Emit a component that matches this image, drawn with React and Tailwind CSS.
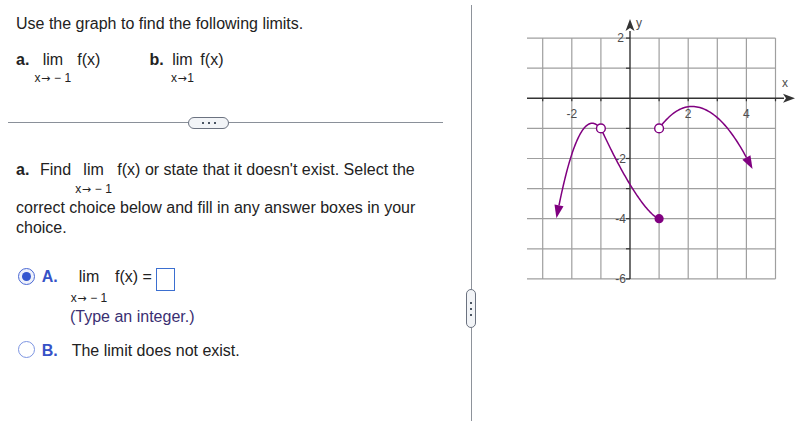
import React from "react";

// graph coordinate helpers (page pixels)
const X = (x) => 630 + 29.1 * x;
const Y = (y) => 98.3 - 30.1 * y;

const curvePath = (f, x0, x1, n = 60) => {
	let d = "";
	for (let i = 0; i <= n; i++) {
		const x = x0 + ((x1 - x0) * i) / n;
		d += `${i === 0 ? "M" : "L"}${X(x).toFixed(2)} ${Y(f(x)).toFixed(2)} `;
	}
	return d;
};

// arrowhead from the curve end, pointing away along the tangent
const arrowHead = (f, xb, dir) => {
	const h = 0.001;
	const bx = X(xb);
	const by = Y(f(xb));
	const tx = X(xb + dir * h) - bx;
	const ty = Y(f(xb + dir * h)) - by;
	const len = Math.hypot(tx, ty);
	const ux = tx / len;
	const uy = ty / len;
	const L = 13;
	const w = 4.6;
	const tipX = bx + ux * L;
	const tipY = by + uy * L;
	return `${tipX},${tipY} ${bx - uy * w},${by + ux * w} ${bx + uy * w},${by - ux * w}`;
};

const leftPiece = (x) => -0.83 - 2.1 * (x + 1.3) ** 2;
const midPiece = (x) => {
	const t = (x + 1) / 2;
	return -1 - 3 * (1 - (1 - t) ** 1.4);
};
const rightPiece = (x) =>
	x < 2.12 ? -0.27 - 0.58 * (x - 2.12) ** 2 : -0.27 - 0.48 * (x - 2.12) ** 2;

const Graph = () => {
	const vx = [-3, -2, -1, 1, 2, 3, 4, 5];
	const hy = [2, 1, -1, -2, -3, -4, -5, -6];
	const purple = "#800080";
	return (
		<svg width="319" height="421" viewBox="476 0 319 421" className="block">
			{/* grid */}
			{hy.map((k) => (
				<line key={"h" + k} x1="527" x2={X(5)} y1={Y(k)} y2={Y(k)} stroke="#9f9f9f" strokeWidth="1.2" />
			))}
			{vx.map((k) => (
				<line key={"v" + k} x1={X(k)} x2={X(k)} y1={Y(2)} y2={Y(-6)} stroke="#9f9f9f" strokeWidth="1.2" />
			))}
			{/* axes */}
			<line x1="527" x2="784" y1={Y(0)} y2={Y(0)} stroke="#333" strokeWidth="1.4" />
			<polygon points={`795,${Y(0)} 783,${Y(0) - 4.5} 786,${Y(0)} 783,${Y(0) + 4.5}`} fill="#333" />
			<line x1="630" x2="630" y1={Y(-6)} y2="31" stroke="#333" strokeWidth="1.4" />
			<polygon points="630,19 625.5,31 630,28 634.5,31" fill="#333" />
			{vx.map((k) => (
				<line key={"tx" + k} x1={X(k)} x2={X(k)} y1={Y(0)} y2={Y(0) + 3} stroke="#333" strokeWidth="1.2" />
			))}
			{hy.map((k) => (
				<line key={"ty" + k} x1="626" x2="630" y1={Y(k)} y2={Y(k)} stroke="#333" strokeWidth="1.2" />
			))}
			{/* labels */}
			<g fill="#4d4d4d" fontSize="12">
				<text x="624" y={Y(2) + 4.3} textAnchor="end">2</text>
				<text x="626" y={Y(-2) + 4.3} textAnchor="end">-2</text>
				<text x="626" y={Y(-4) + 4.3} textAnchor="end">-4</text>
				<text x="626" y={Y(-6) + 4.3} textAnchor="end">-6</text>
				<text x={X(-2)} y="118" textAnchor="middle">-2</text>
				<text x={X(2)} y="118" textAnchor="middle">2</text>
				<text x={X(4)} y="118" textAnchor="middle">4</text>
				<text x="782" y="87">x</text>
				<text x="636" y="27">y</text>
			</g>
			{/* function */}
			<g fill="none" stroke={purple} strokeWidth="1.5">
				<path d={curvePath(leftPiece, -2.44, -1)} />
				<path d={curvePath(midPiece, -1, 1)} />
				<path d={curvePath(rightPiece, 1, 4.0)} />
			</g>
			<polygon points={arrowHead(leftPiece, -2.44, -1)} fill={purple} />
			<polygon points={arrowHead(rightPiece, 4.0, 1)} fill={purple} />
			<circle cx={X(-1)} cy={Y(-1)} r="4.4" fill="#fff" stroke={purple} strokeWidth="1.4" />
			<circle cx={X(1)} cy={Y(-1)} r="4.4" fill="#fff" stroke={purple} strokeWidth="1.4" />
			<circle cx={X(1)} cy={Y(-4)} r="4.6" fill={purple} />
		</svg>
	);
};

// subscript "x→a" with a wider arrow glyph
const Sub = ({ to }) => (
	<>
		x<span className="font-['DejaVu_Sans',sans-serif] text-[11px] leading-none mx-[0.5px]">→</span>
		{to}
	</>
);

// "lim" with its subscript centred below
const Lim = ({ sub, className, subClass }) => (
	<span className={`inline-flex flex-col items-center shrink-0 ${className}`}>
		<span className="leading-[20px]">lim</span>
		<span className={`text-[12px] leading-[14px] h-[14px] whitespace-nowrap ${subClass}`}>{sub}</span>
	</span>
);

const Radio = ({ checked, className }) => (
	<span
		className={`w-[17px] h-[17px] shrink-0 rounded-full flex items-center justify-center border-[1.5px] ${
			checked ? "border-[#4a68d4] bg-[#eef1fb]" : "border-[#7d95e2] bg-white"
		} ${className}`}>
		{checked && <span className="w-[9px] h-[9px] rounded-full bg-[#3456cf]" />}
	</span>
);

export default function App() {
	return (
		<div className="w-[795px] h-[421px] bg-white flex overflow-hidden font-['Liberation_Sans',Arial,sans-serif] text-[#222]">
			{/* question panel */}
			<div className="w-[466px] shrink-0 text-[16px] leading-[20px]">
				<p className="ml-[16px] mt-[14px] whitespace-nowrap">Use the graph to find the following limits.</p>

				<div className="mt-[15.7px] ml-[16px] flex items-start whitespace-nowrap">
					<b>a.</b>
					<Lim sub={<Sub to=" − 1" />} className="ml-[4px] w-[39px]" subClass="mt-[1px]" />
					<span className="ml-[5px]">f(x)</span>
					<b className="ml-[49px]">b.</b>
					<Lim sub={<Sub to="1" />} className="ml-[5.7px] w-[26px]" subClass="mt-[1px]" />
					<span className="ml-[5px]">f(x)</span>
				</div>

				{/* collapsible separator */}
				<div className="mt-[32.3px] ml-[8px] h-[12px] flex items-center">
					<div className="w-[180px] h-px bg-[#8a9099]" />
					<div className="w-[41px] h-[12px] rounded-full border border-[#6b7280] bg-[#f2f4f7] flex items-center justify-center gap-[4px]">
						<span className="w-[2px] h-[2px] bg-[#4b5563]" />
						<span className="w-[2px] h-[2px] bg-[#4b5563]" />
						<span className="w-[2px] h-[2px] bg-[#4b5563]" />
					</div>
					<div className="w-[214px] h-px bg-[#8a9099]" />
				</div>

				<div className="mt-[30.7px] ml-[16px] flex items-start whitespace-nowrap">
					<b>a.</b>
					<span className="ml-[10.7px]">Find</span>
					<Lim sub={<Sub to=" − 1" />} className="ml-[2.9px] w-[39px]" subClass="mt-[2px]" />
					<span className="ml-[4.3px]">f(x) or state that it doesn't exist. Select the</span>
				</div>
				<p className="mt-[2.6px] ml-[16px] w-[430px] leading-[19.5px]">
					correct choice below and fill in any answer boxes in your choice.
				</p>

				{/* choice A */}
				<div className="mt-[29.7px] flex items-start whitespace-nowrap">
					<Radio checked className="ml-[18px] mt-[1px]" />
					<b className="ml-[6.7px] text-[#3652c7]">A.</b>
					<Lim sub={<Sub to=" − 1" />} className="ml-[12.3px] w-[38px]" subClass="mt-[4px]" />
					<span className="ml-[7px]">f(x) =</span>
					<span className="ml-[4px] mt-[1px] w-[19px] h-[23px] border border-[#3b6fd0] bg-white" />
				</div>
				<p className="mt-[2.4px] ml-[70px] text-[#3a2f72]">(Type an integer.)</p>

				{/* choice B */}
				<div className="mt-[13.3px] flex items-start whitespace-nowrap">
					<Radio className="ml-[18px]" />
					<b className="ml-[6.7px] text-[#3652c7]">B.</b>
					<span className="ml-[14px]">The limit does not exist.</span>
				</div>
			</div>

			{/* splitter */}
			<div className="w-[10px] shrink-0 flex flex-col items-center">
				<div className="mt-[5px] w-px h-[284px] bg-[#8e939b]" />
				<div className="w-[10px] h-[39px] shrink-0 rounded-full border border-[#6b7280] bg-[#f2f4f7] flex flex-col items-center justify-center gap-[4px]">
					<span className="w-[2px] h-[2px] bg-[#4b5563]" />
					<span className="w-[2px] h-[2px] bg-[#4b5563]" />
					<span className="w-[2px] h-[2px] bg-[#4b5563]" />
				</div>
				<div className="w-px flex-1 bg-[#8e939b]" />
			</div>

			{/* graph panel */}
			<div className="flex-1">
				<Graph />
			</div>
		</div>
	);
}
